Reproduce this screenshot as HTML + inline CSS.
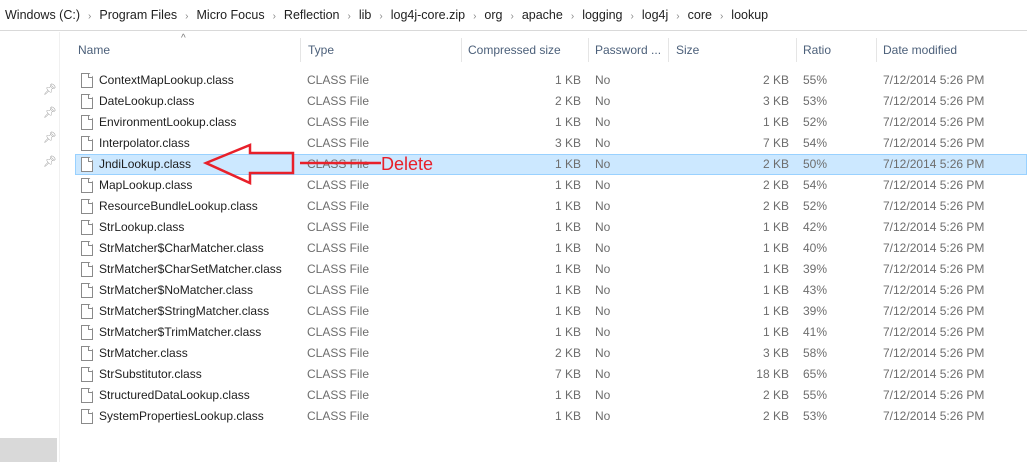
<!DOCTYPE html>
<html><head><style>
*{margin:0;padding:0;box-sizing:border-box}
body{width:1027px;height:462px;background:#fff;font-family:"Liberation Sans",sans-serif;font-size:12px;color:#1e1e1e;position:relative;overflow:hidden}
.bc{position:absolute;top:0;left:0;width:1027px;height:31px;border-bottom:1px solid #d9d9d9;line-height:31px;font-size:12.5px;white-space:nowrap;padding-left:5px}
.bc span.s{color:#888;font-size:10px;margin:0 8px}
.lp{position:absolute;left:59px;top:32px;width:1px;height:430px;background:#f0f0f0}
.gb{position:absolute;left:0;top:438px;width:57px;height:24px;background:#d9d9d9}
.pin{position:absolute;left:43px;color:#9a9a9a;font-size:11px}
.hd{position:absolute;top:32px;height:35px;line-height:36px;color:#4c607a;font-size:12px}
.dv{position:absolute;top:38px;width:1px;height:24px;background:#e5e5e5}
.row{position:absolute;left:75px;width:952px;height:21px;line-height:21px;white-space:nowrap}
.row.sel{background:#cce8ff;box-shadow:inset 0 0 0 1px #99d1ff}
.row span{position:absolute;top:0}
.ic{position:absolute;left:6px;top:3px;width:12px;height:15px;border:1px solid #8a8a8a;background:#fff;clip-path:polygon(0 0,70% 0,100% 25%,100% 100%,0 100%)}
.ic:after{content:"";position:absolute;right:-1px;top:-1px;width:4px;height:4px;border-left:1px solid #8a8a8a;border-bottom:1px solid #8a8a8a}
.g{color:#6d6d6d}
.r{text-align:right}
</style></head><body>
<div class="bc">Windows (C:)<span class="s">›</span>Program Files<span class="s">›</span>Micro Focus<span class="s">›</span>Reflection<span class="s">›</span>lib<span class="s">›</span>log4j-core.zip<span class="s">›</span>org<span class="s">›</span>apache<span class="s">›</span>logging<span class="s">›</span>log4j<span class="s">›</span>core<span class="s">›</span>lookup</div>
<div class="lp"></div><div class="gb"></div>
<div class="pin" style="top:83px">📌︎</div>
<div class="pin" style="top:106px">📌︎</div>
<div class="pin" style="top:131px">📌︎</div>
<div class="pin" style="top:155px">📌︎</div>
<div style="position:absolute;left:181px;top:33px;color:#777;font-size:10px">^</div>
<div class="hd" style="left:78px">Name</div>
<div class="dv" style="left:300px"></div><div class="hd" style="left:308px">Type</div>
<div class="dv" style="left:461px"></div><div class="hd" style="left:468px">Compressed size</div>
<div class="dv" style="left:588px"></div><div class="hd" style="left:595px">Password ...</div>
<div class="dv" style="left:668px"></div><div class="hd" style="left:676px">Size</div>
<div class="dv" style="left:796px"></div><div class="hd" style="left:803px">Ratio</div>
<div class="dv" style="left:876px"></div><div class="hd" style="left:883px">Date modified</div>
<div id="rows"></div>
<script>
var d=[["ContextMapLookup.class",1,2,"55%"],["DateLookup.class",2,3,"53%"],["EnvironmentLookup.class",1,1,"52%"],["Interpolator.class",3,7,"54%"],["JndiLookup.class",1,2,"50%"],["MapLookup.class",1,2,"54%"],["ResourceBundleLookup.class",1,2,"52%"],["StrLookup.class",1,1,"42%"],["StrMatcher$CharMatcher.class",1,1,"40%"],["StrMatcher$CharSetMatcher.class",1,1,"39%"],["StrMatcher$NoMatcher.class",1,1,"43%"],["StrMatcher$StringMatcher.class",1,1,"39%"],["StrMatcher$TrimMatcher.class",1,1,"41%"],["StrMatcher.class",2,3,"58%"],["StrSubstitutor.class",7,18,"65%"],["StructuredDataLookup.class",1,2,"55%"],["SystemPropertiesLookup.class",1,2,"53%"]];
var h="";d.forEach(function(r,i){var t=70+i*21;h+='<div class="row'+(i==4?' sel':'')+'" style="top:'+t+'px"><div class="ic"></div><span style="left:24px">'+r[0]+'</span><span class="g" style="left:232px">CLASS File</span><span class="g r" style="left:400px;width:106px">'+r[1]+' KB</span><span class="g" style="left:520px">No</span><span class="g r" style="left:610px;width:104px">'+r[2]+' KB</span><span class="g" style="left:728px">'+r[3]+'</span><span class="g" style="left:808px">7/12/2014 5:26 PM</span></div>'});
document.getElementById("rows").innerHTML=h;
</script>
<svg style="position:absolute;left:0;top:0" width="1027" height="462">
<polygon points="206,163 250,145 250,153 293,153 293,173 250,173 250,183" fill="none" stroke="#e8202a" stroke-width="2.5"/>
<line x1="300" y1="163" x2="381" y2="163" stroke="#e8202a" stroke-width="2.5"/>
<text x="381" y="170" fill="#e8202a" font-family="Liberation Sans" font-size="18">Delete</text>
</svg>
</body></html>
